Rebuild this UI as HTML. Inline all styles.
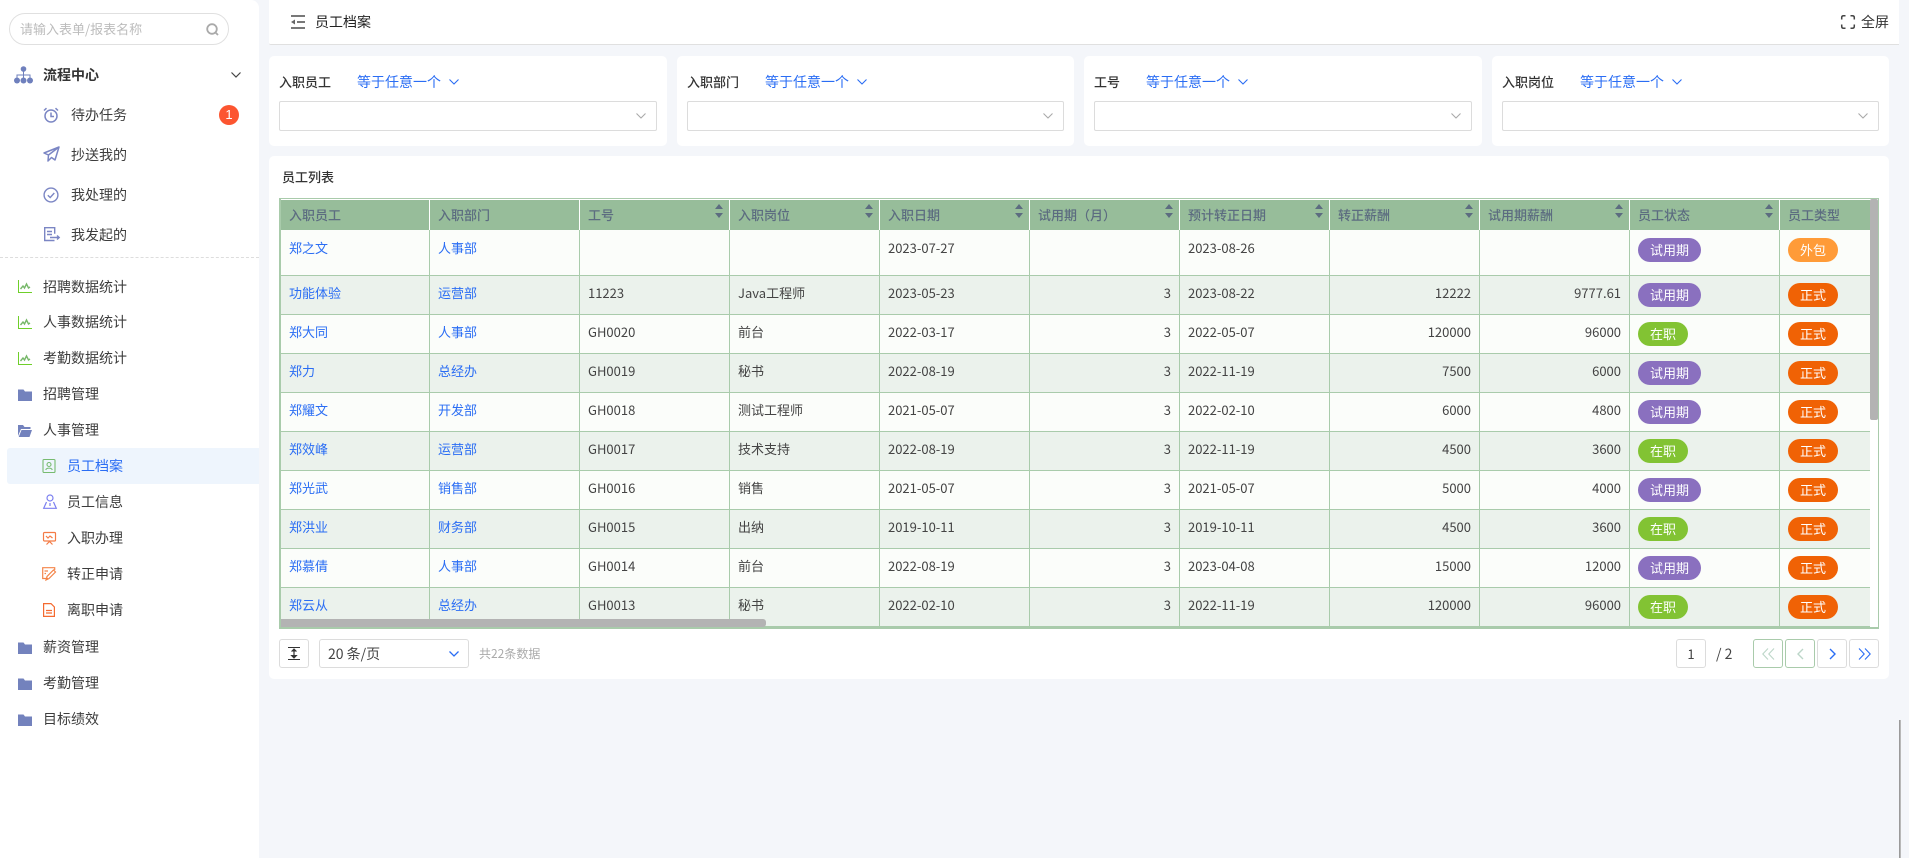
<!DOCTYPE html>
<html lang="zh"><head><meta charset="utf-8"><title>员工档案</title>
<style>
*{box-sizing:border-box}
html,body{margin:0;padding:0;width:1909px;height:858px;overflow:hidden;background:#f4f6fa;font-family:"WenQuanYi Zen Hei","Noto Sans CJK SC","Liberation Sans",sans-serif;font-size:13px;color:#333}
.a{position:absolute}
.t{position:absolute;line-height:20px;white-space:nowrap}
#side{position:absolute;left:0;top:0;width:259px;height:858px;background:#fff;border-radius:0 8px 0 0}
.mi{position:absolute;font-size:14px;line-height:20px;color:#3c3c3c;white-space:nowrap}
svg{position:absolute;display:block;overflow:visible}
.card{position:absolute;background:#fff;border-radius:5px}
.sel{position:absolute;top:45px;height:30px;background:#fff;border:1px solid #dcdcdc;border-radius:2px}
.blue{color:#2a6df4}
.eq{font-size:14px}
table{position:absolute;left:0;top:0;border-collapse:separate;border-spacing:0;table-layout:fixed;width:1649px}
th{height:30px;background:#97bd9a;color:#5c6c80;text-align:left;font-weight:500;padding:0 8px;border-right:1px solid #fff;position:relative;line-height:20px;font-size:13px;white-space:nowrap;overflow:hidden}
td{padding:7px 8px 0;vertical-align:top;line-height:20px;border-right:1px solid #a9cbab;border-bottom:1px solid #a9cbab;color:#444;height:39px;white-space:nowrap;overflow:hidden}
tr.o td{background:#fbfdfa}
tr.e td{background:#ebf2ec}
tr.f td{height:46px;padding-top:8px}
td.l{color:#2a6df4}
td.r{text-align:right}
.b{display:inline-block;height:24px;line-height:24px;padding:0 12px;border-radius:12px;color:#fff;vertical-align:top}
.p{background:#8a70bf}.g{background:#82c333}.c{background:#f06205}.w{background:#ff9b38}
.s{position:absolute;right:5px;top:4px;width:9px;height:14px}
.s:before{content:"";position:absolute;left:0;top:0;border-left:4.5px solid transparent;border-right:4.5px solid transparent;border-bottom:5.5px solid #5c6c80}
.s:after{content:"";position:absolute;left:0;bottom:0;border-left:4.5px solid transparent;border-right:4.5px solid transparent;border-top:5.5px solid #5c6c80}
.pg{position:absolute;top:639px;width:30px;height:29px;background:#fff;border:1px solid #dcdcdc;border-radius:3px}
</style></head><body>

<div id="side">
<div class="a" style="left:9px;top:13px;width:220px;height:32px;border:1px solid #e0e0e0;border-radius:16px"></div>
<div class="t" style="left:20px;top:19px;color:#bcbcbc;font-size:13px">请输入表单/报表名称</div>
<svg style="left:206px;top:23px" width="13" height="13" viewBox="0 0 13 13" fill="none" stroke="#aaa" stroke-width="1.800"><circle cx="6" cy="6" r="4.800"/><path d="M9.500 9.500 12 12"/></svg>

<svg style="left:14px;top:66px" width="19" height="18" viewBox="0 0 19 18" fill="#6f80bd"><circle cx="9.500" cy="3" r="2.800"/><circle cx="3" cy="14.500" r="3"/><circle cx="9.500" cy="14.500" r="3"/><circle cx="16" cy="14.500" r="3"/><path d="M9 5h1v3.500h6.500V12h-1V9.500h-5.500V12H9V9.500H3.500V12h-1V8.500H9z"/></svg>
<div class="mi" style="left:43px;top:65px;font-weight:700;color:#333">流程中心</div>
<svg style="left:231px;top:72px" width="10" height="6" viewBox="0 0 10 6" fill="none" stroke="#444" stroke-width="1.200"><path d="M.5.500 5 5 9.500.500"/></svg>

<svg style="left:43px;top:107px" width="16" height="16" viewBox="0 0 16 16" fill="none" stroke="#7b86c4" stroke-width="1.500"><circle cx="8" cy="9" r="6"/><path d="M8 5.500V9.500h3M1 3.500 3.500 1.200M15 3.500 12.500 1.200"/></svg>
<div class="mi" style="left:71px;top:105px">待办任务</div>
<div class="a" style="left:219px;top:105px;width:20px;height:20px;border-radius:50%;background:#fc5530;color:#fff;text-align:center;line-height:20px;font-size:13px;font-family:'Liberation Sans',sans-serif">1</div>
<svg style="left:43px;top:146px" width="17" height="17" viewBox="0 0 17 17" fill="none" stroke="#7b86c4" stroke-width="1.500" stroke-linejoin="round"><path d="M16 1 1 7l4.500 2L5 15l3.500-3.500L12 14zM16 1 5.500 9"/></svg>
<div class="mi" style="left:71px;top:145px">抄送我的</div>
<svg style="left:43px;top:187px" width="16" height="16" viewBox="0 0 16 16" fill="none" stroke="#7b86c4" stroke-width="1.400"><circle cx="8" cy="8" r="6.900"/><path d="M4.800 8.200 7.200 10.500 11.300 6"/></svg>
<div class="mi" style="left:71px;top:185px">我处理的</div>
<svg style="left:44px;top:227px" width="16" height="15" viewBox="0 0 16 15" fill="none" stroke="#7b86c4" stroke-width="1.400"><path d="M10.500 13.500H.700V.700h10v6M3 4.500h5M3 7.500h5M6 10.500h9M13 8.500l2.200 2-2.200 2"/></svg>
<div class="mi" style="left:71px;top:225px">我发起的</div>
<div class="a" style="left:0;top:257px;width:259px;border-top:1px dashed #ddd"></div>

<svg style="left:18px;top:280px" width="14" height="13" viewBox="0 0 14 13" fill="none"><path d="M.5 0v12.500H14" stroke="#6fcf2a" stroke-width="1"/><path d="M2.500 9 5 6l1.500 2L8.500 4l2 4 1.500-1" stroke="#77b86a" stroke-width="1.400"/></svg>
<div class="mi" style="left:43px;top:277px">招聘数据统计</div>
<svg style="left:18px;top:316px" width="14" height="13" viewBox="0 0 14 13" fill="none"><path d="M.5 0v12.500H14" stroke="#6fcf2a" stroke-width="1"/><path d="M2.500 9 5 6l1.500 2L8.500 4l2 4 1.500-1" stroke="#77b86a" stroke-width="1.400"/></svg>
<div class="mi" style="left:43px;top:312px">人事数据统计</div>
<svg style="left:18px;top:352px" width="14" height="13" viewBox="0 0 14 13" fill="none"><path d="M.5 0v12.500H14" stroke="#6fcf2a" stroke-width="1"/><path d="M2.500 9 5 6l1.500 2L8.500 4l2 4 1.500-1" stroke="#77b86a" stroke-width="1.400"/></svg>
<div class="mi" style="left:43px;top:348px">考勤数据统计</div>
<svg style="left:18px;top:389px" width="14" height="12" viewBox="0 0 14 12" fill="#7382bd"><path d="M0 .5h5.500L7 2.500h7V12H0z"/></svg>
<div class="mi" style="left:43px;top:384px">招聘管理</div>
<svg style="left:18px;top:425px" width="14" height="12" viewBox="0 0 14 12" fill="#7382bd"><path d="M0 0h5l1.500 2H12.500V4H3L0 11zM3.500 5H14l-2.500 7H.700z"/></svg>
<div class="mi" style="left:43px;top:420px">人事管理</div>

<div class="a" style="left:7px;top:448px;width:252px;height:36px;background:#eef5fd;border-radius:3px 0 0 3px"></div>
<svg style="left:42px;top:459px" width="14" height="14" viewBox="0 0 14 14" fill="none" stroke="#77bb70" stroke-width="1.100"><rect x="1" y=".5" width="12" height="13" rx="1"/><circle cx="7" cy="5.500" r="2"/><path d="M3.800 11c.5-2.500 5.900-2.500 6.400 0"/></svg>
<div class="mi blue" style="left:67px;top:456px">员工档案</div>
<svg style="left:43px;top:494px" width="14" height="15" viewBox="0 0 14 15" fill="none" stroke="#7b7ff0" stroke-width="1.200"><circle cx="7" cy="4" r="3"/><path d="M3.500 8 .7 14.300h12.600L10.500 8M7 9v3"/></svg>
<div class="mi" style="left:67px;top:492px">员工信息</div>
<svg style="left:43px;top:532px" width="13" height="13" viewBox="0 0 13 13" fill="none" stroke="#f47b45" stroke-width="1.200"><rect x=".5" y=".5" width="12" height="8.500" rx="1"/><path d="M3 4l2 2 2-2 2.500 2M3.500 12.500l3-3 3 3"/></svg>
<div class="mi" style="left:67px;top:528px">入职办理</div>
<svg style="left:42px;top:567px" width="14" height="14" viewBox="0 0 14 14" fill="none" stroke="#f4854a" stroke-width="1.200"><path d="M6 11.500H.7V.7h12V3M4 13l1-3.500L11.500 3l2 2L7 11.500z M2.500 4H6M2.500 6.500H4"/></svg>
<div class="mi" style="left:67px;top:564px">转正申请</div>
<svg style="left:43px;top:603px" width="12" height="14" viewBox="0 0 12 14" fill="none" stroke="#f46a30" stroke-width="1.200"><path d="M.6.600H8L11.400 4V13.400H.6zM3 7.500H9M3 10H9"/></svg>
<div class="mi" style="left:67px;top:600px">离职申请</div>

<svg style="left:18px;top:642px" width="14" height="12" viewBox="0 0 14 12" fill="#7382bd"><path d="M0 .5h5.500L7 2.500h7V12H0z"/></svg>
<div class="mi" style="left:43px;top:637px">薪资管理</div>
<svg style="left:18px;top:678px" width="14" height="12" viewBox="0 0 14 12" fill="#7382bd"><path d="M0 .5h5.500L7 2.500h7V12H0z"/></svg>
<div class="mi" style="left:43px;top:673px">考勤管理</div>
<svg style="left:18px;top:714px" width="14" height="12" viewBox="0 0 14 12" fill="#7382bd"><path d="M0 .5h5.500L7 2.500h7V12H0z"/></svg>
<div class="mi" style="left:43px;top:709px">目标绩效</div>
</div>

<!-- top bar -->
<div class="a" style="left:269px;top:0;width:1630px;height:45px;background:#fff;border-bottom:1px solid #e0e0e0;border-radius:0 0 0 2px"></div>
<svg style="left:291px;top:15px" width="14" height="14" viewBox="0 0 14 14" fill="none" stroke="#666" stroke-width="1.800"><path d="M0 1h14M6 7H14M0 13H14"/><path d="M0 7 4 4.500V9.500z" fill="#666" stroke="none"/></svg>
<div class="t" style="left:315px;top:12px;font-size:14px;color:#222">员工档案</div>
<svg style="left:1841px;top:15px" width="14" height="14" viewBox="0 0 14 14" fill="none" stroke="#444" stroke-width="1.500"><path d="M4.500.7H2.500Q.7.700.7 2.500V4.500M9.500.7h1.800Q13.300.700 13.300 2.500V4.500M.7 9.500v1.800Q.7 13.300 2.500 13.300H4.500M13.300 9.500v1.800Q13.300 13.300 11.300 13.300H9.500"/></svg>
<div class="t" style="left:1861px;top:12px;font-size:14px;color:#333">全屏</div>

<!-- filters -->
<div class="card" style="left:269px;top:56px;width:398px;height:90px">
 <div class="t" style="left:10px;top:16px;color:#333;font-weight:500">入职员工</div>
 <div class="t blue eq" style="left:88px;top:16px">等于任意一个</div>
 <svg style="left:180px;top:23px" width="10" height="6" viewBox="0 0 10 6" fill="none" stroke="#2a6df4" stroke-width="1.100"><path d="M.5.500 5 5 9.500.500"/></svg>
 <div class="sel" style="left:10px;width:378px"><svg style="right:10px;top:11px;left:auto" width="10" height="6" viewBox="0 0 10 6" fill="none" stroke="#aaa" stroke-width="1.100"><path d="M.5.500 5 5 9.500.500"/></svg></div>
</div>
<div class="card" style="left:677px;top:56px;width:397px;height:90px">
 <div class="t" style="left:10px;top:16px;color:#333;font-weight:500">入职部门</div>
 <div class="t blue eq" style="left:88px;top:16px">等于任意一个</div>
 <svg style="left:180px;top:23px" width="10" height="6" viewBox="0 0 10 6" fill="none" stroke="#2a6df4" stroke-width="1.100"><path d="M.5.500 5 5 9.500.500"/></svg>
 <div class="sel" style="left:10px;width:377px"><svg style="right:10px;top:11px;left:auto" width="10" height="6" viewBox="0 0 10 6" fill="none" stroke="#aaa" stroke-width="1.100"><path d="M.5.500 5 5 9.500.500"/></svg></div>
</div>
<div class="card" style="left:1084px;top:56px;width:398px;height:90px">
 <div class="t" style="left:10px;top:16px;color:#333;font-weight:500">工号</div>
 <div class="t blue eq" style="left:62px;top:16px">等于任意一个</div>
 <svg style="left:154px;top:23px" width="10" height="6" viewBox="0 0 10 6" fill="none" stroke="#2a6df4" stroke-width="1.100"><path d="M.5.500 5 5 9.500.500"/></svg>
 <div class="sel" style="left:10px;width:378px"><svg style="right:10px;top:11px;left:auto" width="10" height="6" viewBox="0 0 10 6" fill="none" stroke="#aaa" stroke-width="1.100"><path d="M.5.500 5 5 9.500.500"/></svg></div>
</div>
<div class="card" style="left:1492px;top:56px;width:397px;height:90px">
 <div class="t" style="left:10px;top:16px;color:#333;font-weight:500">入职岗位</div>
 <div class="t blue eq" style="left:88px;top:16px">等于任意一个</div>
 <svg style="left:180px;top:23px" width="10" height="6" viewBox="0 0 10 6" fill="none" stroke="#2a6df4" stroke-width="1.100"><path d="M.5.500 5 5 9.500.500"/></svg>
 <div class="sel" style="left:10px;width:377px"><svg style="right:10px;top:11px;left:auto" width="10" height="6" viewBox="0 0 10 6" fill="none" stroke="#aaa" stroke-width="1.100"><path d="M.5.500 5 5 9.500.500"/></svg></div>
</div>

<!-- list card -->
<div class="card" style="left:269px;top:156px;width:1620px;height:523px"></div>
<div class="t" style="left:282px;top:167px;color:#333;font-weight:500">员工列表</div>

<div class="a" style="left:279px;top:198px;width:1600px;height:431px;background:#fff;border:1px solid #a9cbab;border-left-width:2px;border-bottom-width:2px"></div>
<div class="a" style="left:281px;top:200px;width:1589px;height:427px;overflow:hidden;background:#ebf2ec">
<table>
<colgroup><col style="width:149px"><col style="width:150px"><col style="width:150px"><col style="width:150px"><col style="width:150px"><col style="width:150px"><col style="width:150px"><col style="width:150px"><col style="width:150px"><col style="width:150px"><col style="width:150px"></colgroup>
<tr><th>入职员工</th><th>入职部门</th><th>工号<i class="s"></i></th><th>入职岗位<i class="s"></i></th><th>入职日期<i class="s"></i></th><th>试用期（月）<i class="s"></i></th><th>预计转正日期<i class="s"></i></th><th>转正薪酬<i class="s"></i></th><th>试用期薪酬<i class="s"></i></th><th>员工状态<i class="s"></i></th><th>员工类型</th></tr>
<tr class="o f"><td class="l">郑之文</td><td class="l">人事部</td><td></td><td></td><td>2023-07-27</td><td class="r"></td><td>2023-08-26</td><td class="r"></td><td class="r"></td><td><span class="b p">试用期</span></td><td><span class="b w">外包</span></td></tr>
<tr class="e"><td class="l">功能体验</td><td class="l">运营部</td><td>11223</td><td>Java工程师</td><td>2023-05-23</td><td class="r">3</td><td>2023-08-22</td><td class="r">12222</td><td class="r">9777.61</td><td><span class="b p">试用期</span></td><td><span class="b c">正式</span></td></tr>
<tr class="o"><td class="l">郑大同</td><td class="l">人事部</td><td>GH0020</td><td>前台</td><td>2022-03-17</td><td class="r">3</td><td>2022-05-07</td><td class="r">120000</td><td class="r">96000</td><td><span class="b g">在职</span></td><td><span class="b c">正式</span></td></tr>
<tr class="e"><td class="l">郑力</td><td class="l">总经办</td><td>GH0019</td><td>秘书</td><td>2022-08-19</td><td class="r">3</td><td>2022-11-19</td><td class="r">7500</td><td class="r">6000</td><td><span class="b p">试用期</span></td><td><span class="b c">正式</span></td></tr>
<tr class="o"><td class="l">郑耀文</td><td class="l">开发部</td><td>GH0018</td><td>测试工程师</td><td>2021-05-07</td><td class="r">3</td><td>2022-02-10</td><td class="r">6000</td><td class="r">4800</td><td><span class="b p">试用期</span></td><td><span class="b c">正式</span></td></tr>
<tr class="e"><td class="l">郑效峰</td><td class="l">运营部</td><td>GH0017</td><td>技术支持</td><td>2022-08-19</td><td class="r">3</td><td>2022-11-19</td><td class="r">4500</td><td class="r">3600</td><td><span class="b g">在职</span></td><td><span class="b c">正式</span></td></tr>
<tr class="o"><td class="l">郑光武</td><td class="l">销售部</td><td>GH0016</td><td>销售</td><td>2021-05-07</td><td class="r">3</td><td>2021-05-07</td><td class="r">5000</td><td class="r">4000</td><td><span class="b p">试用期</span></td><td><span class="b c">正式</span></td></tr>
<tr class="e"><td class="l">郑洪业</td><td class="l">财务部</td><td>GH0015</td><td>出纳</td><td>2019-10-11</td><td class="r">3</td><td>2019-10-11</td><td class="r">4500</td><td class="r">3600</td><td><span class="b g">在职</span></td><td><span class="b c">正式</span></td></tr>
<tr class="o"><td class="l">郑慕倩</td><td class="l">人事部</td><td>GH0014</td><td>前台</td><td>2022-08-19</td><td class="r">3</td><td>2023-04-08</td><td class="r">15000</td><td class="r">12000</td><td><span class="b p">试用期</span></td><td><span class="b c">正式</span></td></tr>
<tr class="e"><td class="l">郑云从</td><td class="l">总经办</td><td>GH0013</td><td>秘书</td><td>2022-02-10</td><td class="r">3</td><td>2022-11-19</td><td class="r">120000</td><td class="r">96000</td><td><span class="b g">在职</span></td><td><span class="b c">正式</span></td></tr>
</table>
</div>
<div class="a" style="left:1870px;top:199px;width:8px;height:221px;background:#b3b3b3;border-radius:2px"></div>
<div class="a" style="left:281px;top:619px;width:485px;height:8px;background:#b3b3b3;border-radius:0 3px 3px 0"></div>

<!-- pager -->
<div class="pg" style="left:279px"><svg style="left:8px;top:7px" width="12" height="13" viewBox="0 0 12 13" fill="none" stroke="#333" stroke-width="1"><path d="M0 .5h12M0 12.500h12"/><path d="M6 3v7" stroke-width="1.200"/><path d="M3.500 4.500 6 2l2.500 2.500M3.500 8.500 6 11l2.500-2.500z" fill="#333"/></svg></div>
<div class="a" style="left:319px;top:639px;width:150px;height:29px;border:1px solid #dcdcdc;border-radius:3px;background:#fff"></div>
<div class="t" style="left:328px;top:644px;font-size:14px;color:#444">20 条/页</div>
<svg style="left:449px;top:651px" width="10" height="6" viewBox="0 0 10 6" fill="none" stroke="#2a6df4" stroke-width="1.300"><path d="M.5.500 5 5 9.500.500"/></svg>
<div class="t" style="left:479px;top:644px;font-size:12px;color:#aaa">共22条数据</div>
<div class="pg" style="left:1676px;text-align:center;line-height:27px;font-size:13px;color:#444">1</div>
<div class="t" style="left:1716px;top:644px;font-size:14px;color:#444">/ 2</div>
<div class="pg" style="left:1753px;border-color:#a9cbab"><svg style="left:8px;top:8px" width="13" height="12" viewBox="0 0 13 12" fill="none" stroke="#bcd6c8" stroke-width="1.100"><path d="M6 .5.800 6 6 11.500M12 .5 6.800 6 12 11.500"/></svg></div>
<div class="pg" style="left:1785px;border-color:#a9cbab"><svg style="left:11px;top:8px" width="7" height="12" viewBox="0 0 7 12" fill="none" stroke="#bcd6c8" stroke-width="1.400"><path d="M6 1 1 6l5 5"/></svg></div>
<div class="pg" style="left:1817px"><svg style="left:11px;top:8px" width="7" height="12" viewBox="0 0 7 12" fill="none" stroke="#2a6df4" stroke-width="1.400"><path d="M1 1l5 5-5 5"/></svg></div>
<div class="pg" style="left:1849px"><svg style="left:8px;top:8px" width="13" height="12" viewBox="0 0 13 12" fill="none" stroke="#2a6df4" stroke-width="1.100"><path d="M1 .5 6.200 6 1 11.500M7 .5 12.200 6 7 11.500"/></svg></div>

<div class="a" style="left:1899px;top:720px;width:2px;height:138px;background:linear-gradient(90deg,#8a8a8a,#c8c8c8)"></div>
</body></html>
